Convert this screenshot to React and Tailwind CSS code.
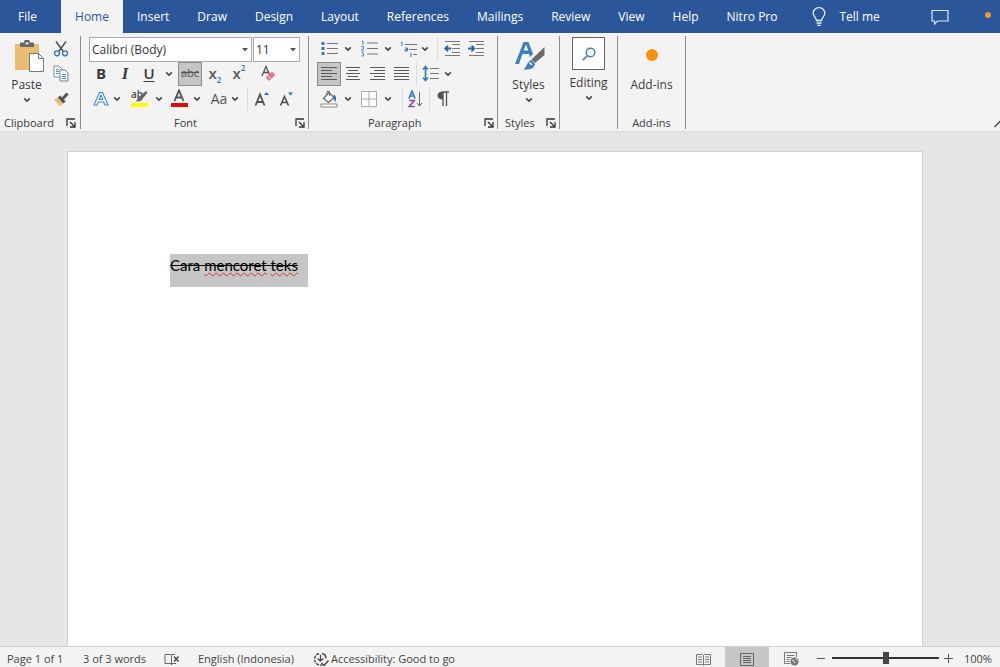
import React, { useState } from "react";

const TABS = ["Insert", "Draw", "Design", "Layout", "References", "Mailings", "Review", "View", "Help", "Nitro Pro"];

function Svg({ w, h, children, className = "" }) {
  return (
    <svg width={w} height={h} viewBox={`0 0 ${w} ${h}`} fill="none" aria-hidden="true" className={`shrink-0 ${className}`}>
      {children}
    </svg>
  );
}

function Chevron() {
  return (
    <Svg w={8} h={6}>
      <path d="M1.2 1.4 4 4.1 6.8 1.4" stroke="#444" strokeWidth="1.5" />
    </Svg>
  );
}

function Tool({ label, children, active = false, className = "" }) {
  return (
    <button
      type="button"
      aria-label={label}
      aria-pressed={active || undefined}
      className={`flex h-6 w-6 shrink-0 items-center justify-center ${active ? "border border-[#8c8c8c] bg-[#c5c5c5]" : ""} ${className}`}
    >
      {children}
    </button>
  );
}

function More({ label, className = "w-3" }) {
  return (
    <button type="button" aria-label={label} className={`flex h-6 shrink-0 items-center justify-center ${className}`}>
      <Chevron />
    </button>
  );
}

function Row({ children }) {
  return <div className="flex h-[25px] items-center">{children}</div>;
}

function Divider({ className = "" }) {
  return <div className={`h-6 w-px shrink-0 bg-[#dcdcdc] ${className}`} />;
}

function Launcher({ label }) {
  return (
    <button type="button" aria-label={label} className="flex h-4 items-center">
      <Svg w={10} h={10}>
        <path d="M1 8V1h8M4 4l4 4M9 4v5H4" stroke="#333" strokeWidth="1.3" />
      </Svg>
    </button>
  );
}

function Group({ title, className, launcher = false, titleClass = "justify-center", children }) {
  return (
    <section aria-label={title || "Editing"} className={`flex h-[93px] shrink-0 flex-col border-r border-[#8f8f8f] ${className}`}>
      <div className="h-[75px] shrink-0">{children}</div>
      <div className={`flex shrink-0 items-center pt-1 text-[11px] leading-4 ${titleClass}`}>
        <span>{title}</span>
        {launcher && <Launcher label={`${title} settings`} />}
      </div>
    </section>
  );
}

function Lines({ rows }) {
  return (
    <Svg w={16} h={15}>
      {rows.map(([a, b], i) => (
        <path key={i} d={`M${a} ${1.5 + i * 3}H${b}`} stroke="#5a5a5a" />
      ))}
    </Svg>
  );
}

function Indent({ dir }) {
  return (
    <Svg w={17} h={15}>
      <path d="M1 .5h15M8 3.5h8M8 7.5h8M8 11.5h8M1 14.5h15" stroke="#777" />
      {dir === "left" ? (
        <path d="M7 7.5H1.5M4 4.7 1.2 7.5 4 10.3" stroke="#2b63a8" strokeWidth="1.8" />
      ) : (
        <path d="M0 7.5h5.5M3.5 4.7l2.8 2.8-2.8 2.8" stroke="#2b63a8" strokeWidth="1.8" />
      )}
    </Svg>
  );
}

function TabBar() {
  return (
    <header className="flex h-[33px] shrink-0 items-stretch overflow-hidden bg-[#2b579a] text-xs text-white">
      <nav className="flex">
        <button type="button" className="w-[61px] pr-[6px]">File</button>
        <button type="button" aria-current="page" className="w-[62px] bg-[#f3f3f3] text-[#2b579a]">Home</button>
        {TABS.map((t) => (
          <button key={t} type="button" className="shrink-0 px-[14px]">{t}</button>
        ))}
      </nav>
      <button type="button" className="ml-[21px] flex shrink-0 items-center gap-[13px]">
        <Svg w={14} h={20}>
          <path d="M4.5 13.5c0-2.8-3.3-3.6-3.3-7.2a5.8 5.6 0 0 1 11.6 0c0 3.600-3.300 4.400-3.300 7.200zM4.500 16h5M5.300 18.300h3.400" stroke="#e8f0fb" strokeWidth="1.300" />
        </Svg>
        Tell me
      </button>
      <button type="button" aria-label="Comments" className="mr-9 ml-auto flex items-center">
        <Svg w={18} h={16}>
          <path d="M1 1.500h16v10.500H6.500L3.500 15v-3H1z" stroke="#dbe7f7" strokeWidth="1.200" />
        </Svg>
      </button>
      <span className="mt-3 mr-[9px] size-[6px] rounded-full bg-[#e89a3c]" />
    </header>
  );
}

function ClipboardGroup() {
  return (
    <Group title="Clipboard" launcher className="w-[81px]" titleClass="justify-between pr-1 pl-1">
      <div className="flex">
        <button type="button" className="flex w-[53px] flex-col items-center pt-1 text-xs leading-4">
          <Svg w={30} h={34} className="ml-1">
            <path d="M1 4h24v26H1z" fill="#e9bd74" />
            <path d="M6 2.500h4a3 3 0 0 1 6 0h4V7H6z" fill="#686868" />
            <path d="M11.500 2.500h3v1.800h-3z" fill="#f3f3f3" />
            <path d="M15.500 13.500h9l5 5v13h-14z" fill="#fff" stroke="#777" />
            <path d="M24.500 13.500v5h5" stroke="#777" />
          </Svg>
          <span className="pt-[3px]">Paste</span>
          <span className="pt-1"><Chevron /></span>
        </button>
        <div className="w-4">
          <Row>
            <Tool label="Cut" className="-mx-1">
              <Svg w={16} h={16}>
                <path d="M3 .5 10 10M13 .5 6 10" stroke="#555" strokeWidth="1.600" />
                <circle cx="4" cy="12.300" r="2.500" stroke="#2b73b8" strokeWidth="1.300" />
                <circle cx="12" cy="12.300" r="2.500" stroke="#2b73b8" strokeWidth="1.300" />
              </Svg>
            </Tool>
          </Row>
          <Row>
            <Tool label="Copy" className="-mx-1">
              <Svg w={16} h={17}>
                <path d="M1 1h5l3 3v8H1z" fill="#fff" stroke="#7790ad" />
                <path d="M7 5h5l3 3v8H7z" fill="#fff" stroke="#66809f" />
                <path d="M3 4.500h3M3 6.500h3M3 8.500h3M9 9.500h4M9 11.500h4M9 13.500h4" stroke="#4a84bf" />
              </Svg>
            </Tool>
          </Row>
          <Row>
            <Tool label="Format Painter" className="-mx-1">
              <Svg w={16} h={16}>
                <path d="M1 8.500 7 6l4 5-4 4.500z" fill="#e9bd74" />
                <path d="m6 5.500 5.500 6M9 8.500l5.500-6" stroke="#555" strokeWidth="3" />
              </Svg>
            </Tool>
          </Row>
        </div>
      </div>
    </Group>
  );
}

function SelectBox({ label, options, className }) {
  return (
    <div className={`relative ${className}`}>
      <select aria-label={label} className="block h-[25px] w-full appearance-none border border-[#ababab] bg-white pl-[2px] text-xs text-[#333]">
        {options.map((o) => (
          <option key={o}>{o}</option>
        ))}
      </select>
      <Svg w={6} h={4} className="pointer-events-none absolute top-[11px] right-1">
        <path d="M0 0h6L3 3.500z" fill="#555" />
      </Svg>
    </div>
  );
}

function FontGroup() {
  return (
    <Group title="Font" launcher className="w-[228px] pl-2" titleClass="justify-between pr-[3px] pl-[85px]">
      <div className="flex gap-px pt-px">
        <SelectBox label="Font name" options={["Calibri (Body)", "Arial", "Cambria"]} className="w-[163px]" />
        <SelectBox label="Font size" options={["11", "12", "14"]} className="w-[47px]" />
      </div>
      <div className="-mt-px">
        <Row>
          <Tool label="Bold" className="text-[15px] font-bold">B</Tool>
          <Tool label="Italic" className="font-['Liberation_Serif',serif] text-[17px] font-bold italic">I</Tool>
          <Tool label="Underline" className="text-[15px] font-semibold underline underline-offset-2">U</Tool>
          <More label="Underline options" className="w-4" />
          <Tool label="Strikethrough" active className="ml-px text-[11px] text-[#555] line-through">abc</Tool>
          <Tool label="Subscript" className="ml-px text-[15px] font-semibold text-[#555]">
            x<span className="pt-3 text-[8px] leading-none text-[#2b73b8]">2</span>
          </Tool>
          <Tool label="Superscript" className="text-[15px] font-semibold text-[#555]">
            x<span className="pb-3 text-[8px] leading-none text-[#2b73b8]">2</span>
          </Tool>
          <Tool label="Clear formatting" className="ml-[6px]">
            <Svg w={16} h={17}>
              <path d="M1 11 5 1.500 8.500 9.500M2.500 7.500h5" stroke="#555" strokeWidth="1.300" />
              <path d="m4.500 12.500 6.500-6 3.500 3.500-6.500 6z" fill="#e8768a" />
              <path d="m6.500 10.700 3.500 3.500" stroke="#f8dfe3" />
            </Svg>
          </Tool>
        </Row>
        <Row>
          <Tool label="Text effects">
            <Svg w={16} h={16}>
              <path d="M1 14 6.500 1.500h3L15 14h-3.200l-1.100-3H5.300l-1.100 3zM6.200 8.500h3.600L8 4z" fill="#fff" stroke="#3f8ad0" strokeWidth="1.100" />
            </Svg>
          </Tool>
          <More label="Text effect options" className="w-2" />
          <Tool label="Highlight" className="ml-[6px]">
            <Svg w={18} h={19} className="overflow-visible">
              <text x="1" y="9" fontSize="10" fontWeight="600" fill="#444" fontFamily="Open Sans, sans-serif">ab</text>
              <path d="m6 12.500 2-4 8-6.500 1.500 1.500L11 12z" fill="#666" />
              <path d="M1 14h17v4H1z" fill="#ffff00" />
            </Svg>
          </Tool>
          <More label="Highlight colours" className="w-4" />
          <Tool label="Font colour">
            <Svg w={18} h={19}>
              <path d="M4.500 12 9 1.500 13.500 12M6 8.500h6" stroke="#555" strokeWidth="1.900" />
              <path d="M1 14h17v4H1z" fill="#e00b0b" />
            </Svg>
          </Tool>
          <More label="Font colours" className="w-3" />
          <Tool label="Change case" className="ml-1 text-sm text-[#555]">Aa</Tool>
          <More label="Case options" className="w-2" />
          <Divider className="ml-2" />
          <Tool label="Grow font" className="ml-[2px]">
            <Svg w={16} h={16}>
              <path d="M1.500 14.500 6 3.500l4.500 11M3 11h6" stroke="#555" strokeWidth="1.800" />
              <path d="M10 4h5l-2.500-3z" fill="#2b73b8" />
            </Svg>
          </Tool>
          <Tool label="Shrink font">
            <Svg w={15} h={16}>
              <path d="M1.500 14.500 5.500 5.500l4 9M3 11.500h5" stroke="#555" strokeWidth="1.700" />
              <path d="M9 1.500h5l-2.500 3z" fill="#2b73b8" />
            </Svg>
          </Tool>
        </Row>
      </div>
    </Group>
  );
}

function ParagraphGroup() {
  return (
    <Group title="Paragraph" launcher className="w-[189px] pl-2" titleClass="justify-between pr-[3px] pl-[51px]">
      <Row>
        <Tool label="Bullets">
          <Svg w={17} h={16}>
            <path d="M6 2.500h11M6 7.500h11M6 12.500h11" stroke="#777" />
            <path d="M.5 1h3v3h-3zM.5 6h3v3h-3zM.5 11h3v3h-3z" fill="#3578bb" />
          </Svg>
        </Tool>
        <More label="Bullet styles" className="w-[14px]" />
        <Tool label="Numbering" className="ml-[2px]">
          <Svg w={17} h={17}>
            <path d="M6 3h11M6 8.500h11M6 14h11" stroke="#777" />
            <path d="m1 1.500 1-.5v4M.5 6.500h2v2l-2 1.500h2M.5 12h2l-1 1.500 1 .5v2h-2" stroke="#3578bb" strokeWidth=".9" />
          </Svg>
        </Tool>
        <More label="Number styles" className="w-[14px]" />
        <Tool label="Multilevel list" className="ml-[2px]">
          <Svg w={18} h={16}>
            <path d="M5 3.500h12M9 8.500h8M13 13.500h4" stroke="#777" />
            <path d="m1 1.500 1-.5v4M5 7h2.500v3H5V8.500h2.500M11 12v4" stroke="#3578bb" />
          </Svg>
        </Tool>
        <More label="Multilevel styles" className="w-2" />
        <Divider className="ml-2" />
        <Tool label="Decrease indent" className="ml-[2px]"><Indent dir="left" /></Tool>
        <Tool label="Increase indent"><Indent dir="right" /></Tool>
      </Row>
      <Row>
        <Tool label="Align left" active><Lines rows={[[0, 16], [0, 11], [0, 16], [0, 11], [0, 16]]} /></Tool>
        <Tool label="Centre"><Lines rows={[[1, 15], [3, 13], [1, 15], [3, 13], [1, 15]]} /></Tool>
        <Tool label="Align right"><Lines rows={[[1, 16], [5, 16], [1, 16], [5, 16], [1, 16]]} /></Tool>
        <Tool label="Justify"><Lines rows={[[1, 16], [1, 16], [1, 16], [1, 16], [1, 16]]} /></Tool>
        <Divider className="ml-[3px]" />
        <Tool label="Line spacing" className="ml-px">
          <Svg w={17} h={17}>
            <path d="M3.500 2v13M1 4.500 3.500 1.500 6 4.500M1 12.500l2.500 3 2.500-3" stroke="#3578bb" strokeWidth="1.600" />
            <path d="M8 3.500h9M8 8.500h9M8 13.500h9" stroke="#777" />
          </Svg>
        </Tool>
        <More label="Spacing options" />
      </Row>
      <Row>
        <Tool label="Shading">
          <Svg w={18} h={18}>
            <path d="m3.500 8.500 5.500-6 5 5-5.500 5z" fill="#fff" stroke="#666" strokeWidth="1.200" />
            <path d="M7 5V1.500h2.500V6" stroke="#666" />
            <path d="M13.500 4.500c3 1 3 4 2 7.500-1.500-2-2.500-3-1.500-5" fill="#3578bb" />
            <path d="M1 14h16v3H1z" fill="#fff" stroke="#888" />
          </Svg>
        </Tool>
        <More label="Shading colours" className="w-[14px]" />
        <Tool label="Borders" className="ml-[2px]">
          <Svg w={16} h={16}>
            <path d="M.5.5h15v15H.5zM8 .5v15M.5 8h15" fill="#fff" stroke="#aaa" />
          </Svg>
        </Tool>
        <More label="Border styles" className="w-[14px]" />
        <Divider className="ml-[7px]" />
        <Tool label="Sort">
          <Svg w={15} h={18}>
            <path d="M1 8.500 4 1l3 7.500M2 6h4" stroke="#3578bb" strokeWidth="1.600" />
            <path d="M1.200 10.500h5l-5 6h5.500" stroke="#9341ad" strokeWidth="1.600" />
            <path d="M11.500 2v14M9 13l2.500 3 2.500-3" stroke="#666" />
          </Svg>
        </Tool>
        <Divider className="ml-[2px]" />
        <Tool label="Show paragraph marks" className="ml-px">
          <Svg w={12} h={15}>
            <path d="M6 .5v8C2.500 8.500.5 7 .5 4.500S2.500.5 6 .5z" fill="#555" />
            <path d="M5 1h7M6 1v14M9.500 1v14" stroke="#555" strokeWidth="1.300" />
          </Svg>
        </Tool>
      </Row>
    </Group>
  );
}

function Ribbon() {
  return (
    <div className="flex h-[99px] shrink-0 overflow-hidden border-b border-[#dedede] bg-[#f3f3f3] pt-[3px]">
      <ClipboardGroup />
      <FontGroup />
      <ParagraphGroup />
      <Group title="Styles" launcher className="w-[62px]" titleClass="justify-between pr-[3px] pl-[7px]">
        <button type="button" className="flex w-full flex-col items-center pt-1 text-xs leading-4">
          <Svg w={33} h={32} className="ml-1">
            <path d="M1 24 9.500 2h5L19 14l-3 3-1-3H8.500L5 24zM9.700 10.500h4.600L12 4.500z" fill="#3f7fc0" />
            <path d="M30.500 7v8L21 23l-3.500-3.500z" fill="#6c6c6c" />
            <path d="M17.500 20 21 24c-1 5-6 6-12 5.500 4-1.500 3.500-8 8.500-9.500z" fill="#3f7fc0" />
            <path d="M15.500 22.500 18 25" stroke="#fff" strokeWidth="1.500" />
          </Svg>
          <span className="pt-[5px]">Styles</span>
          <span className="pt-1"><Chevron /></span>
        </button>
      </Group>
      <Group title="" className="w-[58px]">
        <button type="button" className="flex w-full flex-col items-center pt-px text-xs leading-4">
          <span className="flex size-[33px] items-center justify-center border border-[#666] bg-white">
            <Svg w={14} h={14}>
              <circle cx="8.500" cy="5.500" r="4.300" stroke="#3f7fb5" strokeWidth="1.500" />
              <path d="M5.500 8.500.8 13.200" stroke="#3f7fb5" strokeWidth="1.700" />
            </Svg>
          </span>
          <span className="pt-[5px]">Editing</span>
          <span className="pt-1"><Chevron /></span>
        </button>
      </Group>
      <Group title="Add-ins" className="w-[68px]">
        <button type="button" className="flex w-full flex-col items-center pt-[13px] text-xs leading-4">
          <span className="size-3 rounded-full bg-[#f7920f]" />
          <span className="pt-4">Add-ins</span>
        </button>
      </Group>
      <button type="button" aria-label="Collapse ribbon" className="mb-[3px] ml-auto flex w-[6px] items-end overflow-hidden">
        <Svg w={12} h={8}>
          <path d="m.5 7 5.500-5.500L11.500 7" stroke="#444" strokeWidth="1.400" />
        </Svg>
      </button>
    </div>
  );
}

function StatusBar() {
  const [zoom, setZoom] = useState(50);
  return (
    <footer className="flex h-[21px] shrink-0 items-stretch border-t border-[#d0d0d0] bg-[#f3f3f3] text-[11px] text-[#444]">
      <div className="flex pt-1">
        <button type="button" className="w-[83px] shrink-0 pl-[7px] text-left">Page 1 of 1</button>
        <button type="button" className="w-[81px] shrink-0 text-left">3 of 3 words</button>
        <button type="button" aria-label="Proofing errors" className="flex w-[34px] shrink-0 items-center">
          <Svg w={16} h={13}>
            <path d="M11 1.500H8L7.500 2 7 1.500H1v9h6l.5 1.500.5-1.500h4M7.500 2v10" stroke="#666" />
            <path d="m10 3.500 4.500 5M14.500 3.500l-4.500 5" stroke="#444" strokeWidth="1.400" />
          </Svg>
        </button>
        <button type="button" className="w-[115px] shrink-0 text-left">English (Indonesia)</button>
        <button type="button" className="flex shrink-0 items-center gap-[2px]">
          <Svg w={16} h={15}>
            <path d="M6 1.500A5.800 5.800 0 1 0 9 13" stroke="#444" strokeWidth="1.300" strokeDasharray="3 1" />
            <path d="M7.500 3v5M4.500 6.500l3 2.500 3-2.500M9 1.500c2.500.5 4 2.500 4 5" stroke="#444" strokeWidth="1.300" />
            <path d="m8.500 11 2.500 2.500 4.500-5" stroke="#444" strokeWidth="1.500" />
          </Svg>
          Accessibility: Good to go
        </button>
      </div>
      <div className="ml-auto flex">
        <button type="button" aria-label="Read mode" className="flex w-11 items-center justify-center pt-1">
          <Svg w={15} h={13}>
            <path d="M.5 1.500h6l1 1 1-1h6v10h-6l-1 1-1-1h-6zM7.500 2v10" stroke="#777" />
            <path d="M2 4h4M2 6.500h4M2 9h4M9 4h4M9 6.500h4M9 9h4" stroke="#777" />
          </Svg>
        </button>
        <button type="button" aria-label="Print layout" aria-pressed="true" className="flex w-11 items-center justify-center bg-[#c6c6c6] pt-1">
          <Svg w={14} h={13}>
            <path d="M.5.5h13v12H.5zM3 3.500h8M3 5.500h8M3 7.500h8M3 9.500h8" stroke="#666" />
          </Svg>
        </button>
        <button type="button" aria-label="Web layout" className="flex w-11 items-center justify-center pt-1">
          <Svg w={15} h={14}>
            <path d="M12.500 5V.5H.5v11H6M2.500 3.500h8M2.500 5.500h5M2.500 7.500h3M2.500 9.500h3" stroke="#777" />
            <circle cx="10.500" cy="9.500" r="4" fill="#777" />
            <path d="m8 8 2 1 .5 2M11.500 7l2 1" stroke="#eee" />
          </Svg>
        </button>
        <div className="flex items-center pt-[2px] pl-1">
          <button type="button" aria-label="Zoom out" className="flex h-4 w-[15px] items-center">
            <span className="h-px w-2 bg-[#555]" />
          </button>
          <input
            type="range"
            aria-label="Zoom"
            value={zoom}
            onChange={(e) => setZoom(Number(e.target.value))}
            className="h-3 w-[107px] appearance-none bg-transparent [&::-webkit-slider-runnable-track]:h-[2px] [&::-webkit-slider-runnable-track]:bg-[#333] [&::-webkit-slider-thumb]:-mt-[5px] [&::-webkit-slider-thumb]:h-3 [&::-webkit-slider-thumb]:w-[6px] [&::-webkit-slider-thumb]:appearance-none [&::-webkit-slider-thumb]:bg-[#444]"
          />
          <button type="button" aria-label="Zoom in" className="ml-[5px] flex h-4 w-5 items-center">
            <Svg w={9} h={9}>
              <path d="M4.500 0v9M0 4.500h9" stroke="#555" />
            </Svg>
          </button>
          <button type="button" className="w-9 pt-[2px] text-left">100%</button>
        </div>
      </div>
    </footer>
  );
}

export default function App() {
  return (
    <div className="flex h-screen flex-col overflow-hidden bg-[#e6e6e6] font-['Open_Sans','Noto_Sans',sans-serif] text-[#3b3b3b]">
      <TabBar />
      <Ribbon />
      <main className="flex min-h-0 flex-1 pt-[19px] pr-[77px] pl-[67px]">
        <article className="flex-1 border border-b-0 border-[#d2d2d2] bg-white px-[102px] pt-[102px]">
          <p className="h-[33px] w-[138px] bg-[#c6c6c6] font-[Lato,sans-serif] text-[15px] leading-[22px] whitespace-nowrap text-black line-through">
            Cara{" "}
            <span className="underline decoration-[#d03030] decoration-wavy decoration-1 underline-offset-1">mencoret</span>{" "}
            <span className="underline decoration-[#d03030] decoration-wavy decoration-1 underline-offset-1">teks</span>
          </p>
        </article>
      </main>
      <StatusBar />
    </div>
  );
}
